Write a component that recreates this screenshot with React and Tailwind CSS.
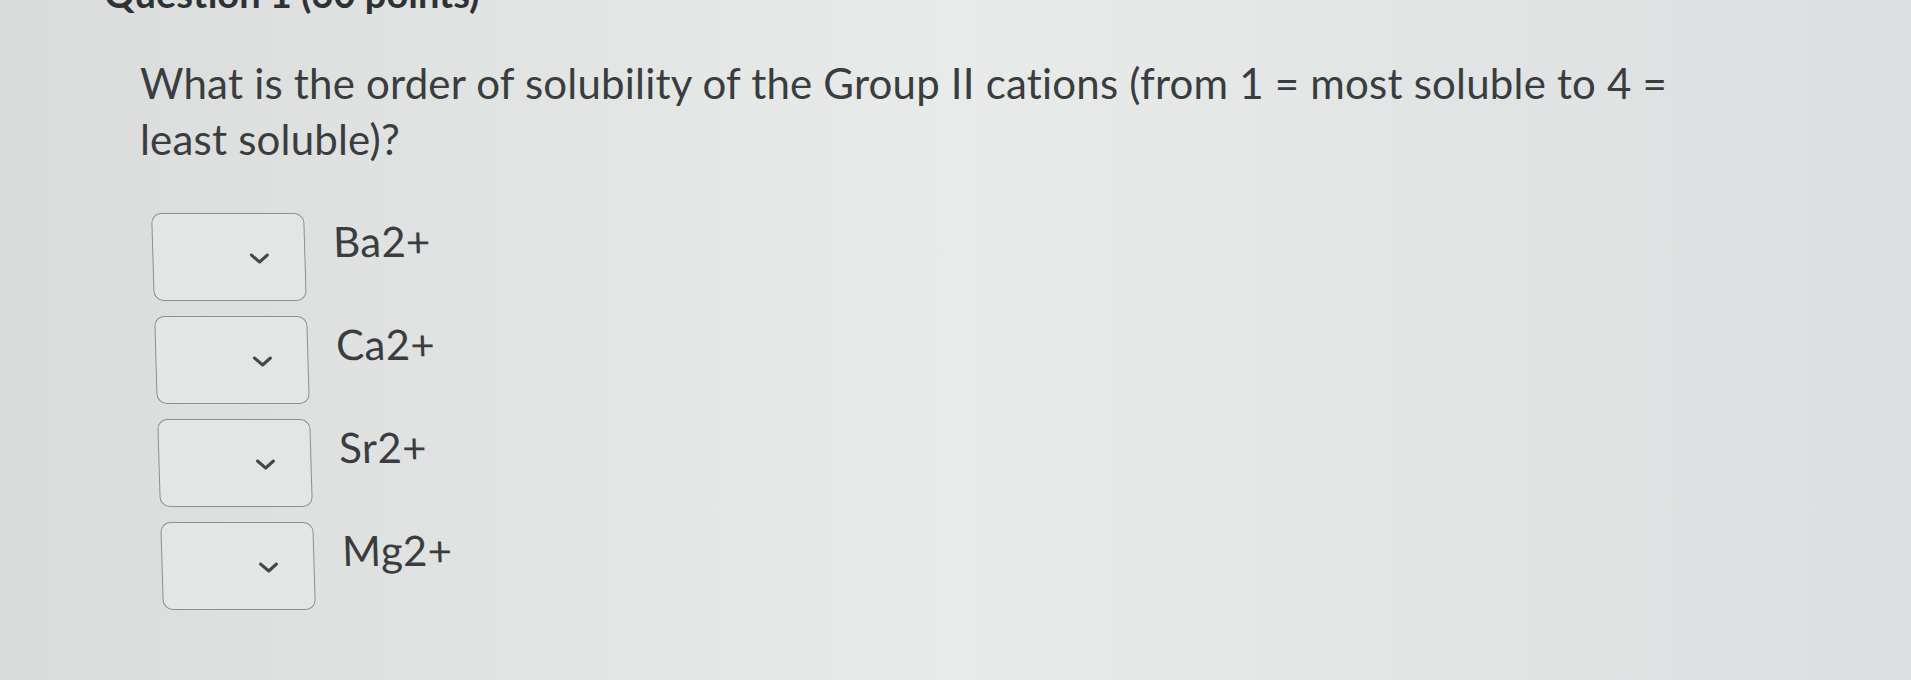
import React, { useState } from 'react';

const cations = ['Ba2+', 'Ca2+', 'Sr2+', 'Mg2+'];

const Chevron = () => (
    <svg width="22" height="13" viewBox="0 0 22 13" fill="none">
        <path d="M3 3l8 7 8-7" stroke="#45484a" strokeWidth="3" strokeLinecap="round" strokeLinejoin="round" />
    </svg>
);

const RankSelect = ({ value, onChange }) => (
    <div className="relative w-[153px] h-[88px] shrink-0 rounded-[10px] border-[1.5px] border-[#8c8f90] bg-[#e3e6e5]">
        <select
            value={value}
            onChange={(e) => onChange(e.target.value)}
            className="w-full h-full appearance-none bg-transparent outline-none text-transparent cursor-pointer"
        >
            <option value=""></option>
            <option value="1">1</option>
            <option value="2">2</option>
            <option value="3">3</option>
            <option value="4">4</option>
        </select>
        {/* dropdown caret */}
        <div className="pointer-events-none absolute left-[95px] top-[38px]">
            <Chevron />
        </div>
    </div>
);

export default function App() {
    const [ranks, setRanks] = useState({});

    return (
        <div
            className="h-[680px] w-full overflow-hidden bg-gradient-to-r from-[#d9dcdb] via-[#e8ebea] to-[#dcdfdf] pl-[104px] text-[#3a3d3f]"
            style={{ fontFamily: 'Lato, "Open Sans", sans-serif' }}
        >
            {/* Question header */}
            <h2 className="-mt-[26px] text-[38px] leading-[38px] font-bold text-[#2f3234]">
                Question 1 (30 points)
            </h2>

            <p className="mt-[43px] ml-[36px] text-[42px] leading-[56px] tracking-[0.2px]">
                What is the order of solubility of the Group II cations (from 1 = most soluble to 4 =
                <br />
                least soluble)?
            </p>

            <div className="mt-[46px] ml-[53px] flex flex-col gap-[15px] origin-center skew-x-[1.7deg]">
                {cations.map((ion) => (
                    <div key={ion} className="flex items-start">
                        <RankSelect
                            value={ranks[ion] || ''}
                            onChange={(v) => setRanks({ ...ranks, [ion]: v })}
                        />
                        <span className="ml-[28px] mt-[7px] text-[42px] leading-[42px] tracking-[0.3px]">{ion}</span>
                    </div>
                ))}
            </div>
        </div>
    );
}
